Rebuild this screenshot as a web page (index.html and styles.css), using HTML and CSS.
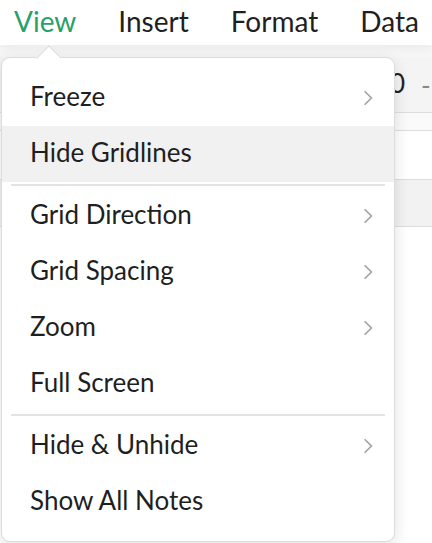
FILE: index.html
```html
<!DOCTYPE html>
<html>
<head>
<meta charset="utf-8">
<link rel="stylesheet" href="styles.css">
</head>
<body>
<div class="topbar">
  <span class="tab active">View</span>
  <span class="tab">Insert</span>
  <span class="tab">Format</span>
  <span class="tab">Data</span>
</div>
<div class="sheet">
  <div class="row r1"><span class="cellnum">0</span><span class="dash">-</span></div>
  <div class="row r2"></div>
  <div class="row r3"></div>
  <div class="row r4"></div>
</div>
<div class="menu">
  <div class="caret"></div>
  <div class="item"><span>Freeze</span><svg class="chev" viewBox="0 0 10 16"><path d="M2 2 L8 8 L2 14"/></svg></div>
  <div class="item hover"><span>Hide Gridlines</span></div>
  <div class="sep"></div>
  <div class="item"><span>Grid Direction</span><svg class="chev" viewBox="0 0 10 16"><path d="M2 2 L8 8 L2 14"/></svg></div>
  <div class="item"><span>Grid Spacing</span><svg class="chev" viewBox="0 0 10 16"><path d="M2 2 L8 8 L2 14"/></svg></div>
  <div class="item"><span>Zoom</span><svg class="chev" viewBox="0 0 10 16"><path d="M2 2 L8 8 L2 14"/></svg></div>
  <div class="item"><span>Full Screen</span></div>
  <div class="sep"></div>
  <div class="item"><span>Hide &amp; Unhide</span><svg class="chev" viewBox="0 0 10 16"><path d="M2 2 L8 8 L2 14"/></svg></div>
  <div class="item"><span>Show All Notes</span></div>
</div>
</body>
</html>
```
FILE: styles.css
```css
html, body {
  margin: 0;
  padding: 0;
  background: #ffffff;
  font-family: Lato, "Noto Sans", sans-serif;
  color: #222222;
}
body {
  width: 432px;
  height: 543px;
  overflow: hidden;
  position: relative;
}
.topbar {
  height: 45px;
  display: flex;
  align-items: center;
  gap: 42px;
  padding-left: 14px;
  font-size: 28px;
  background: #ffffff;
  box-sizing: border-box;
  padding-bottom: 4px;
  position: relative;
  z-index: 2;
  box-shadow: 0 3px 10px rgba(0, 0, 0, 0.05);
}
.tab {
  white-space: nowrap;
  color: #1f1f1f;
}
.tab.active {
  color: #2a9f69;
}
.sheet {
  padding-top: 12px;
  background: linear-gradient(#f6f6f6, #f6f6f6) top / 100% 12px no-repeat, #ffffff;
}
.row {
  border-bottom: 1px solid #dedede;
  display: flex;
  align-items: center;
  font-size: 26px;
  overflow: hidden;
}
.r1 {
  height: 55px;
  background: #f4f4f4;
}
.r2 {
  height: 17px;
  background: #fafafa;
}
.r3 {
  height: 48px;
  background: #ffffff;
}
.r4 {
  height: 46px;
  background: #f2f2f2;
}
.cellnum {
  margin-left: 390px;
  color: #222;
  padding-bottom: 4px;
}
.dash {
  margin-left: 16px;
  color: #888;
}
.menu {
  position: absolute;
  left: 1px;
  top: 57px;
  width: 394px;
  box-sizing: border-box;
  padding: 12px 0 11px;
  background: #ffffff;
  border: 1px solid #dcdcdc;
  border-radius: 9px;
  box-shadow: 0 4px 16px rgba(0, 0, 0, 0.12);
  z-index: 3;
}
.caret {
  position: absolute;
  left: 38px;
  top: -9px;
  width: 17px;
  height: 17px;
  background: #ffffff;
  border-left: 1px solid #dcdcdc;
  border-top: 1px solid #dcdcdc;
  transform: rotate(45deg);
}
.item {
  height: 56px;
  box-sizing: border-box;
  padding: 0 20px 4px 28px;
  display: flex;
  align-items: center;
  justify-content: space-between;
  font-size: 26px;
  color: #1f1f1f;
  position: relative;
}
.item.hover {
  background: #f1f1f1;
}
.chev {
  width: 12px;
  height: 18px;
  margin-top: 4px;
  fill: none;
  stroke: #a3a3a3;
  stroke-width: 1.5;
}
.sep {
  height: 2px;
  margin: 2px 9px 2px 9px;
  background: #e3e3e3;
}
```
